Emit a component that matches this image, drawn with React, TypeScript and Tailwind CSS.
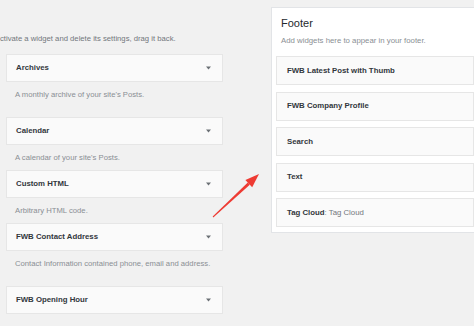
const available = [
  { title: 'Archives', desc: "A monthly archive of your site's Posts.", gap: 'mb-[16px]' },
  { title: 'Calendar', desc: "A calendar of your site's Posts.", gap: 'mb-[6px]' },
  { title: 'Custom HTML', desc: 'Arbitrary HTML code.', gap: 'mb-[6px]' },
  { title: 'FWB Contact Address', desc: 'Contact Information contained phone, email and address.', gap: 'mb-[16px]' },
  { title: 'FWB Opening Hour', desc: '', gap: '' },
];

const footerWidgets = ['FWB Latest Post with Thumb', 'FWB Company Profile', 'Search', 'Text'];

function Caret() {
  return (
    <svg width="5" height="4" viewBox="0 0 5 4" className="shrink-0">
      <polygon points="0,0.5 5,0.5 2.5,3.5" fill="#6b7075" />
    </svg>
  );
}

function WidgetRow({ title, desc, gap }: { title: string; desc: string; gap: string }) {
  return (
    <div className={gap}>
      <div className="ml-[6px] w-[217px] h-[28px] bg-[#fafafa] border border-[#e6e6e6] flex items-center justify-between pl-[9px] pr-[11px]">
        <span className="text-[7.8px] font-bold text-[#32373c]">{title}</span>
        <Caret />
      </div>
      {desc && (
        <p className="ml-[15px] mt-[7px] h-[12px] leading-[12px] text-[7.7px] text-[#8a8f94]">{desc}</p>
      )}
    </div>
  );
}

export default function App() {
  return (
    <div
      className="relative w-[474px] h-[326px] overflow-hidden bg-[#f1f1f1] flex"
      style={{ fontFamily: '"Liberation Sans", Arial, sans-serif' }}
    >
      {/* Available widgets */}
      <div className="w-[223px] shrink-0 flex flex-col pt-[33px]">
        <p className="h-[12px] leading-[12px] text-[7.7px] text-[#72777c] mb-[9px] whitespace-nowrap">
          ctivate a widget and delete its settings, drag it back.
        </p>
        {available.map((w) => (
          <WidgetRow key={w.title} {...w} />
        ))}
      </div>

      {/* Footer sidebar */}
      <div className="ml-[48px] mt-[7px] w-[208px] h-[226px] shrink-0 bg-white border border-[#e2e4e7] px-[4px] pt-[8px]">
        <h3 className="ml-[5px] h-[14px] leading-[14px] text-[11px] text-[#23282d]">Footer</h3>
        <p className="ml-[5px] mt-[5px] h-[12px] leading-[12px] text-[7.8px] text-[#8a8f94]">
          Add widgets here to appear in your footer.
        </p>
        <div className="mt-[9px] flex flex-col gap-[6.5px]">
          {footerWidgets.map((t) => (
            <div key={t} className="w-[198px] h-[29px] bg-[#fafafa] border border-[#e6e6e6] flex items-center pl-[10px]">
              <span className="text-[7.8px] font-bold text-[#32373c]">{t}</span>
            </div>
          ))}
          <div className="w-[198px] h-[29px] bg-[#fafafa] border border-[#e6e6e6] flex items-center pl-[10px]">
            <span className="text-[7.8px] font-bold text-[#32373c]">Tag Cloud</span>
            <span className="text-[7.8px] text-[#72777c]">: Tag Cloud</span>
          </div>
        </div>
      </div>

      {/* Red annotation arrow */}
      <svg className="absolute inset-0 pointer-events-none" width="474" height="326" viewBox="0 0 474 326">
        <polygon points="213.3,217.4 212.7,216.6 247.8,182.5 249.8,184.7" fill="#ee3b33" />
        <polygon points="259,174 245.4,179.9 252.2,187.3" fill="#ee3b33" />
      </svg>
    </div>
  );
}
